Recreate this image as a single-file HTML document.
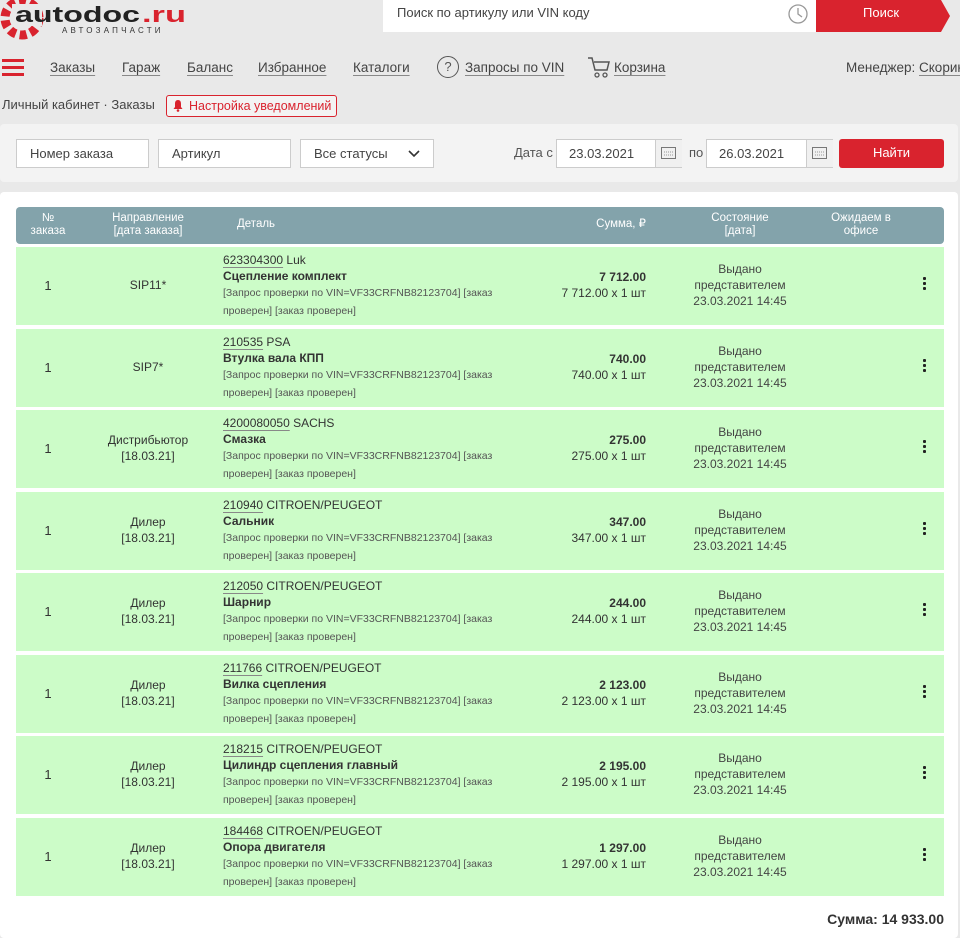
<!DOCTYPE html>
<html><head><meta charset="utf-8"><style>
*{box-sizing:border-box;margin:0;padding:0}
body{width:960px;height:938px;overflow:hidden;background:#e9e9e9;font-family:"Liberation Sans","DejaVu Sans",sans-serif;color:#333;position:relative;font-size:13px}
.a{position:absolute;white-space:nowrap}
.u{text-decoration:underline;text-decoration-color:#888;text-underline-offset:3px}
.inp{position:absolute;background:#fff;border:1px solid #ccc;height:29px;top:139px;font-size:13px;line-height:27px;padding-left:13px;color:#444}
.row{position:absolute;left:16px;width:928px;height:78px;background:#ccfcc8}
.row div{position:absolute;white-space:nowrap}
.c1{left:0;width:64px;text-align:center;top:31px}
.c2{left:82px;width:100px;text-align:center;font-size:12px;line-height:16px}
.c3{left:207px;top:5px;font-size:12px;line-height:16px;color:#333}
.c3 .n{font-weight:bold}
.c3 .m{font-size:10.5px;color:#555;line-height:17px}
.c4{right:298px;text-align:right;top:22px;font-size:12px;line-height:16px}
.c5{left:654px;width:140px;text-align:center;top:14px;font-size:12px;line-height:16px;color:#444}
.dots{left:907px;top:30px;width:3px}
.dots i{display:block;width:3px;height:3px;background:#222;margin-bottom:2px;border-radius:1px}
.nav{top:60px;font-size:13.5px;color:#444}
</style></head><body>
<svg class="a" style="left:0;top:0" width="190" height="44" viewBox="0 0 190 44">
<circle cx="22" cy="18" r="17" fill="none" stroke="#d9232e" stroke-width="9" stroke-dasharray="7 4"/>
<rect x="12" y="4" width="30" height="22" fill="#e9e9e9"/>
<text x="15" y="22" font-family="Liberation Sans" font-weight="bold" font-size="22" fill="#222" textLength="125" lengthAdjust="spacingAndGlyphs">autodoc</text>
<text x="142" y="22" font-family="Liberation Sans" font-weight="bold" font-size="22" fill="#d9232e" textLength="44" lengthAdjust="spacingAndGlyphs">.ru</text>
<text x="62" y="33" font-family="Liberation Sans" font-size="8" fill="#333" letter-spacing="3.2">АВТОЗАПЧАСТИ</text>
</svg>
<div class="a" style="left:383px;top:0;width:434px;height:32px;background:#fff;font-size:13px;line-height:26px;padding-left:14px;color:#444">Поиск по артикулу или VIN коду</div>
<svg class="a" style="left:786px;top:3px" width="24" height="22" viewBox="0 0 24 22"><circle cx="12" cy="11" r="9" fill="none" stroke="#999" stroke-width="1.3"/><path d="M12 5v6l4 3" fill="none" stroke="#999" stroke-width="1.3"/></svg>
<div class="a" style="left:816px;top:0;width:134px;height:32px;background:#d9232e;color:#fff;font-size:13px;line-height:26px;padding-left:47px;clip-path:polygon(0 0,125px 0,134px 16px,125px 32px,0 32px)">Поиск</div>
<div class="a" style="left:2px;top:59px;width:22px"><div style="height:3px;background:#d9232e;margin-bottom:4px"></div><div style="height:3px;background:#d9232e;margin-bottom:4px"></div><div style="height:3px;background:#d9232e"></div></div>
<div class="a nav" style="left:50px"><span class="u">Заказы</span></div>
<div class="a nav" style="left:122px"><span class="u">Гараж</span></div>
<div class="a nav" style="left:187px"><span class="u">Баланс</span></div>
<div class="a nav" style="left:258px"><span class="u">Избранное</span></div>
<div class="a nav" style="left:353px"><span class="u">Каталоги</span></div>
<div class="a" style="left:437px;top:56px;width:22px;height:22px;border:1.3px solid #555;border-radius:50%;font-size:13px;text-align:center;line-height:20px;color:#555">?</div>
<div class="a nav" style="left:465px"><span class="u">Запросы по VIN</span></div>
<svg class="a" style="left:587px;top:55px" width="24" height="24" viewBox="0 0 24 24"><path d="M1 3h4l3 12h12l2-8H7" fill="none" stroke="#555" stroke-width="1.5"/><circle cx="10" cy="20" r="2" fill="none" stroke="#555" stroke-width="1.3"/><circle cx="18" cy="20" r="2" fill="none" stroke="#555" stroke-width="1.3"/></svg>
<div class="a nav" style="left:614px"><span class="u">Корзина</span></div>
<div class="a nav" style="left:846px">Менеджер: <span class="u">Скорин</span></div>
<div class="a" style="top:97px;left:2px;font-size:13px;color:#444">Личный кабинет · Заказы</div>
<div class="a" style="top:95px;left:166px;height:22px;width:171px;border:1px solid #d9232e;border-radius:3px;color:#d9232e;font-size:12.5px;line-height:20px;padding-left:22px;background:#f3f3f3">Настройка уведомлений</div>
<svg class="a" style="left:172px;top:99px" width="12" height="13" viewBox="0 0 12 13"><path d="M6 1C3.5 1 3 3 3 5v3L1.5 10h9L9 8V5C9 3 8.5 1 6 1z" fill="#d9232e"/><circle cx="6" cy="11.5" r="1.3" fill="#d9232e"/></svg>
<div class="a" style="left:0;top:124px;width:958px;height:58px;background:#f3f3f3;border-radius:4px"></div>
<div class="inp" style="left:16px;width:133px">Номер заказа</div>
<div class="inp" style="left:158px;width:133px">Артикул</div>
<div class="inp" style="left:300px;width:134px">Все статусы</div>
<svg class="a" style="left:408px;top:149px" width="12" height="10"><path d="M1 2l5 5 5-5" fill="none" stroke="#333" stroke-width="1.6"/></svg>
<div class="a" style="left:514px;top:145px;font-size:13px;color:#555">Дата с</div>
<div class="inp" style="left:556px;width:126px;padding-left:12px">23.03.2021</div>
<div class="a" style="left:655px;top:140px;width:27px;height:27px;background:#f0f0f0;border-left:1px solid #ccc"></div>
<svg class="a" style="left:661px;top:147px" width="15" height="12"><rect x=".5" y=".5" width="14" height="11" fill="none" stroke="#777"/><path d="M3 5h9M3 8h9" stroke="#999" stroke-dasharray="1 1"/></svg>
<div class="a" style="left:689px;top:145px;font-size:13px;color:#555">по</div>
<div class="inp" style="left:706px;width:127px;padding-left:12px">26.03.2021</div>
<div class="a" style="left:806px;top:140px;width:27px;height:27px;background:#f0f0f0;border-left:1px solid #ccc"></div>
<svg class="a" style="left:812px;top:147px" width="15" height="12"><rect x=".5" y=".5" width="14" height="11" fill="none" stroke="#777"/><path d="M3 5h9M3 8h9" stroke="#999" stroke-dasharray="1 1"/></svg>
<div class="a" style="left:839px;top:139px;width:105px;height:29px;background:#d9232e;border-radius:3px;color:#fff;text-align:center;line-height:28px;font-size:13px">Найти</div>
<div class="a" style="left:0;top:192px;width:958px;height:746px;background:#fff;border-radius:4px"></div>
<div class="a" style="left:16px;top:207px;width:928px;height:37px;background:#83a3ab;border-radius:4px;color:#fff;font-size:11.5px;line-height:13px">
<div class="a" style="left:0;width:64px;text-align:center;top:5px">№<br>заказа</div>
<div class="a" style="left:82px;width:100px;text-align:center;top:5px">Направление<br>[дата заказа]</div>
<div class="a" style="left:221px;top:11px">Деталь</div>
<div class="a" style="right:298px;top:11px">Сумма, ₽</div>
<div class="a" style="left:664px;width:120px;text-align:center;top:5px">Состояние<br>[дата]</div>
<div class="a" style="left:800px;width:90px;text-align:center;top:5px">Ожидаем в<br>офисе</div>
</div>

<div class="row" style="top:247px"><div class="c1">1</div><div class="c2" style="top:30px">SIP11*</div><div class="c3"><span class="u">623304300</span> Luk<br><span class="n">Сцепление комплект</span><br><span class="m">[Запрос проверки по VIN=VF33CRFNB82123704] [заказ<br>проверен] [заказ проверен]</span></div><div class="c4"><b>7 712.00</b><br>7 712.00 x 1 шт</div><div class="c5">Выдано<br>представителем<br>23.03.2021 14:45</div><div class="dots"><i></i><i></i><i></i></div></div>
<div class="row" style="top:329px"><div class="c1">1</div><div class="c2" style="top:30px">SIP7*</div><div class="c3"><span class="u">210535</span> PSA<br><span class="n">Втулка вала КПП</span><br><span class="m">[Запрос проверки по VIN=VF33CRFNB82123704] [заказ<br>проверен] [заказ проверен]</span></div><div class="c4"><b>740.00</b><br>740.00 x 1 шт</div><div class="c5">Выдано<br>представителем<br>23.03.2021 14:45</div><div class="dots"><i></i><i></i><i></i></div></div>
<div class="row" style="top:410px"><div class="c1">1</div><div class="c2" style="top:22px">Дистрибьютор<br>[18.03.21]</div><div class="c3"><span class="u">4200080050</span> SACHS<br><span class="n">Смазка</span><br><span class="m">[Запрос проверки по VIN=VF33CRFNB82123704] [заказ<br>проверен] [заказ проверен]</span></div><div class="c4"><b>275.00</b><br>275.00 x 1 шт</div><div class="c5">Выдано<br>представителем<br>23.03.2021 14:45</div><div class="dots"><i></i><i></i><i></i></div></div>
<div class="row" style="top:492px"><div class="c1">1</div><div class="c2" style="top:22px">Дилер<br>[18.03.21]</div><div class="c3"><span class="u">210940</span> CITROEN/PEUGEOT<br><span class="n">Сальник</span><br><span class="m">[Запрос проверки по VIN=VF33CRFNB82123704] [заказ<br>проверен] [заказ проверен]</span></div><div class="c4"><b>347.00</b><br>347.00 x 1 шт</div><div class="c5">Выдано<br>представителем<br>23.03.2021 14:45</div><div class="dots"><i></i><i></i><i></i></div></div>
<div class="row" style="top:573px"><div class="c1">1</div><div class="c2" style="top:22px">Дилер<br>[18.03.21]</div><div class="c3"><span class="u">212050</span> CITROEN/PEUGEOT<br><span class="n">Шарнир</span><br><span class="m">[Запрос проверки по VIN=VF33CRFNB82123704] [заказ<br>проверен] [заказ проверен]</span></div><div class="c4"><b>244.00</b><br>244.00 x 1 шт</div><div class="c5">Выдано<br>представителем<br>23.03.2021 14:45</div><div class="dots"><i></i><i></i><i></i></div></div>
<div class="row" style="top:655px"><div class="c1">1</div><div class="c2" style="top:22px">Дилер<br>[18.03.21]</div><div class="c3"><span class="u">211766</span> CITROEN/PEUGEOT<br><span class="n">Вилка сцепления</span><br><span class="m">[Запрос проверки по VIN=VF33CRFNB82123704] [заказ<br>проверен] [заказ проверен]</span></div><div class="c4"><b>2 123.00</b><br>2 123.00 x 1 шт</div><div class="c5">Выдано<br>представителем<br>23.03.2021 14:45</div><div class="dots"><i></i><i></i><i></i></div></div>
<div class="row" style="top:736px"><div class="c1">1</div><div class="c2" style="top:22px">Дилер<br>[18.03.21]</div><div class="c3"><span class="u">218215</span> CITROEN/PEUGEOT<br><span class="n">Цилиндр сцепления главный</span><br><span class="m">[Запрос проверки по VIN=VF33CRFNB82123704] [заказ<br>проверен] [заказ проверен]</span></div><div class="c4"><b>2 195.00</b><br>2 195.00 x 1 шт</div><div class="c5">Выдано<br>представителем<br>23.03.2021 14:45</div><div class="dots"><i></i><i></i><i></i></div></div>
<div class="row" style="top:818px"><div class="c1">1</div><div class="c2" style="top:22px">Дилер<br>[18.03.21]</div><div class="c3"><span class="u">184468</span> CITROEN/PEUGEOT<br><span class="n">Опора двигателя</span><br><span class="m">[Запрос проверки по VIN=VF33CRFNB82123704] [заказ<br>проверен] [заказ проверен]</span></div><div class="c4"><b>1 297.00</b><br>1 297.00 x 1 шт</div><div class="c5">Выдано<br>представителем<br>23.03.2021 14:45</div><div class="dots"><i></i><i></i><i></i></div></div>

<div class="a" style="right:16px;top:911px;font-size:14px;font-weight:bold;color:#333">Сумма: 14 933.00</div>
</body></html>
